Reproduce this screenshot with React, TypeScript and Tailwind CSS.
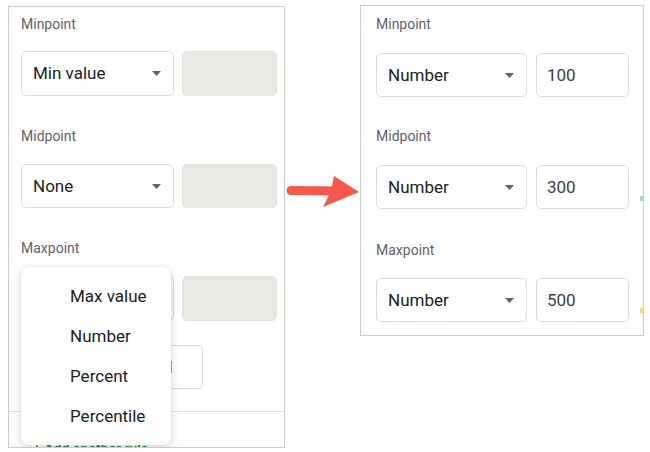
import React from "react";

function Caret() {
  return (
    <svg width="9" height="5" viewBox="0 0 9 5" className="shrink-0">
      <path d="M0 0 L9 0 L4.5 5 Z" fill="#5f6368" />
    </svg>
  );
}

function Select({ label, w }: { label: string; w: string }) {
  return (
    <div
      className={`${w} h-full border border-[#dadce0] rounded-[5px] bg-white flex items-center justify-between pl-[11px] pr-[12px]`}
    >
      <span className="text-[17px] text-[#202124] leading-none">{label}</span>
      <Caret />
    </div>
  );
}

function Label({ children }: { children: React.ReactNode }) {
  return <div className="h-[20px] leading-[20px] text-[14px] text-[#5f6368]">{children}</div>;
}

function Swatch() {
  return <div className="w-[95px] h-full rounded-[5px] bg-[#e9e9e3] border border-[#e2e1da]" />;
}

function ValueInput({ v }: { v: string }) {
  return (
    <div className="w-[93px] h-full border border-[#dadce0] rounded-[5px] bg-white flex items-center pl-[10px]">
      <span className="text-[17px] text-[#3c4043] leading-none">{v}</span>
    </div>
  );
}

function Arrow() {
  return (
    <svg width="74" height="34" viewBox="0 0 74 34" className="shrink-0">
      <line x1="5" y1="15.5" x2="54" y2="16" stroke="#f7584b" strokeWidth="9" strokeLinecap="round" />
      <path d="M48 1 L73 17 L37 32 L45 16 Z" fill="#f7584b" />
    </svg>
  );
}

export default function App() {
  return (
    <div className="w-[650px] h-[452px] bg-white flex items-start font-['Roboto','Liberation_Sans',sans-serif]">
      {/* Left panel */}
      <div className="ml-[8px] mt-[6px] w-[277px] h-[442px] border border-[#cccccc] relative overflow-hidden shrink-0">
        <div className="pl-[12px] pt-[7px]">
          <Label>Minpoint</Label>
          <div className="mt-[17px] h-[45px] flex gap-[8px]">
            <Select label="Min value" w="w-[153px]" />
            <Swatch />
          </div>
          <div className="mt-[30px]">
            <Label>Midpoint</Label>
          </div>
          <div className="mt-[18px] h-[44px] flex gap-[8px]">
            <Select label="None" w="w-[153px]" />
            <Swatch />
          </div>
          <div className="mt-[30px]">
            <Label>Maxpoint</Label>
          </div>
          <div className="mt-[18px] h-[45px] flex gap-[8px]">
            <div className="w-[153px] h-full border border-[#dadce0] rounded-[5px] bg-white" />
            <Swatch />
          </div>
          <div className="mt-[24px] w-[182px] h-[44px] border border-[#dadce0] rounded-[5px] relative">
            <div className="absolute left-[148px] top-[15px] w-[2px] h-[12px] bg-[#7cc49b]" />
          </div>
        </div>
        <div className="mt-[22px] h-px bg-[#e0e0e0]" />
        <div className="pl-[24px] pt-[27px] text-[14px] leading-[20px] font-medium text-[#188038]">
          + Add another rule
        </div>

        {/* Dropdown menu overlay */}
        <div className="absolute left-[12px] top-[260px] w-[150px] h-[178px] bg-white rounded-[7px] shadow-[0_2px_8px_rgba(0,0,0,0.18),0_0_1px_rgba(0,0,0,0.2)] pt-[10px]">
          {["Max value", "Number", "Percent", "Percentile"].map((t) => (
            <div key={t} className="h-[40px] flex items-center pl-[49px] text-[17px] text-[#202124]">
              {t}
            </div>
          ))}
        </div>
      </div>

      {/* Arrow */}
      <div className="ml-[1px] mt-[175px]">
        <Arrow />
      </div>

      {/* Right panel */}
      <div className="mt-[5px] w-[284px] h-[331px] border border-[#cccccc] relative shrink-0">
        <div className="pl-[15px] pt-[8px]">
          <Label>Minpoint</Label>
          <div className="mt-[19px] h-[44px] flex gap-[9px]">
            <Select label="Number" w="w-[151px]" />
            <ValueInput v="100" />
          </div>
          <div className="mt-[29px]">
            <Label>Midpoint</Label>
          </div>
          <div className="mt-[19px] h-[44px] flex gap-[9px]">
            <Select label="Number" w="w-[151px]" />
            <ValueInput v="300" />
          </div>
          <div className="mt-[31px]">
            <Label>Maxpoint</Label>
          </div>
          <div className="mt-[18px] h-[44px] flex gap-[9px]">
            <Select label="Number" w="w-[151px]" />
            <ValueInput v="500" />
          </div>
        </div>
        <div className="absolute right-0 top-[190px] w-[3px] h-[5px] bg-[#a9d9c0]" />
        <div className="absolute right-0 top-[302px] w-[3px] h-[5px] bg-[#f6d77b]" />
      </div>
    </div>
  );
}
